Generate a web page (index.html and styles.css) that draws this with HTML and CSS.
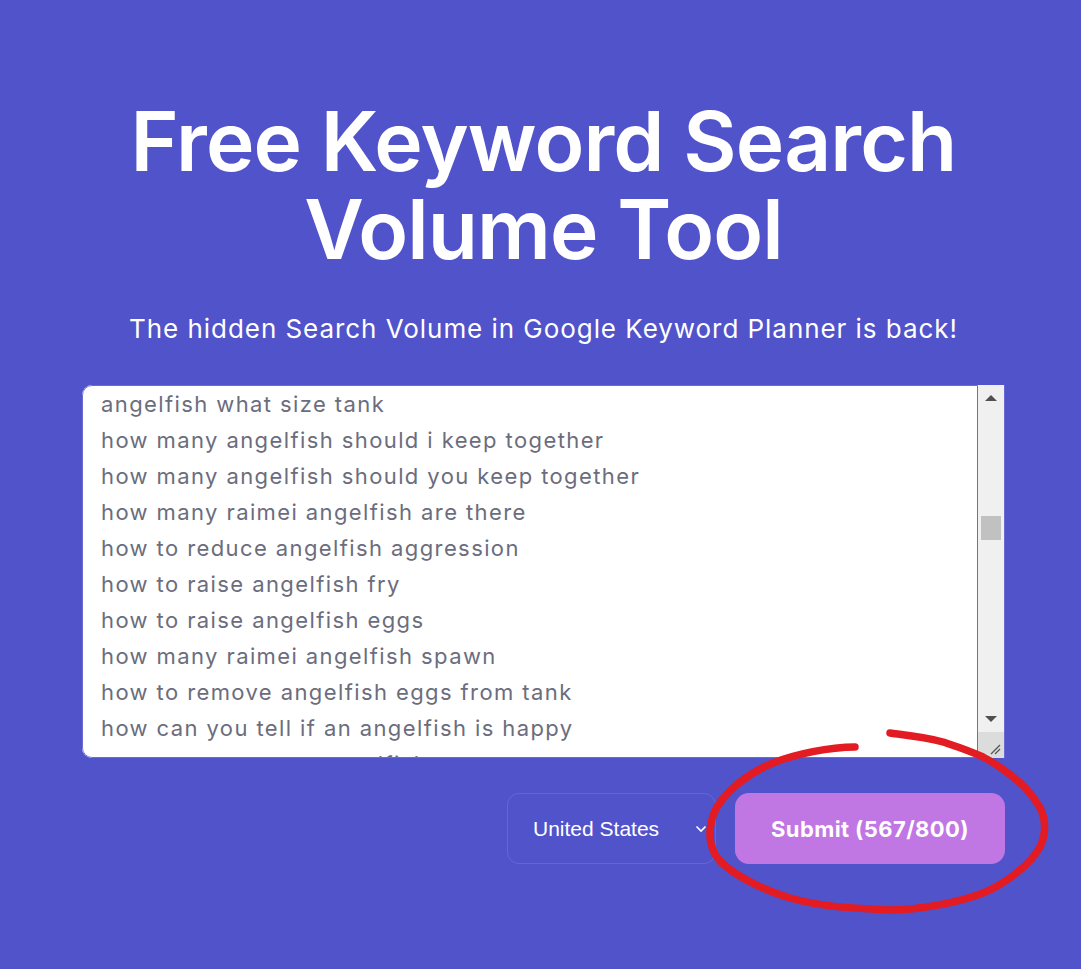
FILE: index.html
```html
<!DOCTYPE html>
<html lang="en">

<head>
    <meta charset="UTF-8">
    <meta name="viewport" content="width=device-width, initial-scale=1.0">
    <title>Free Keyword Search Volume Tool</title>
    <link rel="stylesheet" href="styles.css">
</head>

<body>
    <main class="tool">
        <h1 class="tool-title">Free Keyword Search Volume Tool</h1>
        <p class="tool-subtitle">The hidden Search Volume in Google Keyword Planner is back!</p>

        <div class="editor">
            <div class="editor-text">
                <div>angelfish what size tank</div>
                <div>how many angelfish should i keep together</div>
                <div>how many angelfish should you keep together</div>
                <div>how many raimei angelfish are there</div>
                <div>how to reduce angelfish aggression</div>
                <div>how to raise angelfish fry</div>
                <div>how to raise angelfish eggs</div>
                <div>how many raimei angelfish spawn</div>
                <div>how to remove angelfish eggs from tank</div>
                <div>how can you tell if an angelfish is happy</div>
                <div>are seven or more angelfish</div>
            </div>
            <div class="scrollbar">
                <span class="scroll-arrow up"></span>
                <div class="scroll-track">
                    <span class="scroll-thumb"></span>
                </div>
                <span class="scroll-arrow down"></span>
                <span class="scroll-grip">
                    <svg width="14" height="14" viewBox="0 0 14 14">
                        <path d="M4 13 L13 4 M8 13 L13 8" stroke="#555" stroke-width="1.3" fill="none" />
                    </svg>
                </span>
            </div>
        </div>

        <div class="actions">
            <label class="country">
                <select>
                    <option>United States</option>
                    <option>United Kingdom</option>
                    <option>Canada</option>
                    <option>Australia</option>
                </select>
                <svg class="chevron" width="12" height="8" viewBox="0 0 12 8">
                    <path d="M1.5 1.5 L6 6 L10.5 1.5" stroke="#fff" stroke-width="1.6" fill="none" />
                </svg>
            </label>
            <button class="submit">Submit (567/800)</button>
        </div>
    </main>

    <!-- hand-drawn marker ring around the submit button -->
    <svg class="marker" width="1081" height="969" viewBox="0 0 1081 969">
        <path d="M855 747 C830 747 795 754 773 763 C750 772 723 792 714 813 C707 832 709 850 721 862
                 C733 874 760 889 790 898 C815 905 840 908 890 910 C920 910 960 902 983 893
                 C1005 884 1030 865 1040 847 C1047 832 1046 815 1037 803 C1030 792 1022 784 1013 777
                 C1003 769 995 763 983 757 C968 750 955 746 943 742 C925 737 905 735 890 733"
            stroke="#e21c22" stroke-width="7.5" stroke-linecap="round" fill="none" />
    </svg>
</body>

</html>
```

FILE: styles.css
```css
* {
    box-sizing: border-box;
}

body {
    margin: 0;
    min-height: 100vh;
    background-color: #5153cb;
    font-family: "Inter", "Open Sans", sans-serif;
    position: relative;
}

.tool {
    width: 923px;
    margin-left: 82px;
    padding-top: 98px;
    display: flex;
    flex-direction: column;
}

.tool-title {
    margin: 0;
    color: #ffffff;
    font-size: 82px;
    line-height: 88px;
    font-weight: 600;
    text-align: center;
    letter-spacing: -0.9px;
}

.tool-subtitle {
    margin: 39px 0 0;
    color: #ffffff;
    font-size: 26px;
    line-height: 32px;
    text-align: center;
    letter-spacing: 0.95px;
}

/* keyword list box */
.editor {
    margin-top: 40px;
    height: 373px;
    display: flex;
    background: #ffffff;
    border-radius: 10px 0 0 10px;
    overflow: hidden;
}

.editor-text {
    flex: 1;
    padding: 0 0 0 18px;
    border: 1px solid #6a6ad2;
    border-radius: 10px 0 0 10px;
    overflow: hidden;
    color: #6b6d7d;
    font-size: 22px;
    line-height: 36px;
    letter-spacing: 1.4px;
}

.scrollbar {
    width: 27px;
    background: #f0f0f0;
    display: flex;
    flex-direction: column;
    align-items: center;
    border-right: 1px solid #6a6ad2;
}

.scroll-arrow {
    height: 26px;
    width: 100%;
    display: flex;
    align-items: center;
    justify-content: center;
}

.scroll-arrow::before {
    content: "";
    border-left: 6px solid transparent;
    border-right: 6px solid transparent;
}

.scroll-arrow.up::before {
    border-bottom: 6px solid #505050;
}

.scroll-arrow.down::before {
    border-top: 6px solid #505050;
}

.scroll-track {
    flex: 1;
    width: 100%;
    padding: 105px 3px 0;
}

.scroll-thumb {
    display: block;
    height: 24px;
    background: #c1c1c1;
}

.scroll-grip {
    width: 100%;
    height: 26px;
    background: #dcdcdc;
    display: flex;
    align-items: flex-end;
    justify-content: flex-end;
    padding: 0 3px 3px 0;
}

/* country + submit row */
.actions {
    margin-top: 35px;
    display: flex;
    justify-content: flex-end;
    gap: 19px;
}

.country {
    width: 209px;
    height: 71px;
    display: flex;
    align-items: center;
    padding: 0 8px 0 25px;
    border: 1px solid #6466d8;
    border-radius: 12px;
}

.country select {
    flex: 1;
    appearance: none;
    background: none;
    border: none;
    outline: none;
    color: #ffffff;
    font-family: "Liberation Sans", Arial, sans-serif;
    font-size: 21px;
    padding: 0;
}

.country option {
    color: #222;
}

.chevron {
    flex-shrink: 0;
}

.submit {
    width: 270px;
    height: 71px;
    border: none;
    border-radius: 14px;
    background: #c177e3;
    color: #ffffff;
    font-family: "Inter", "Liberation Sans", sans-serif;
    font-size: 22px;
    font-weight: 700;
    letter-spacing: 0.4px;
    cursor: pointer;
}

.marker {
    position: absolute;
    top: 0;
    left: 0;
    pointer-events: none;
}
```
